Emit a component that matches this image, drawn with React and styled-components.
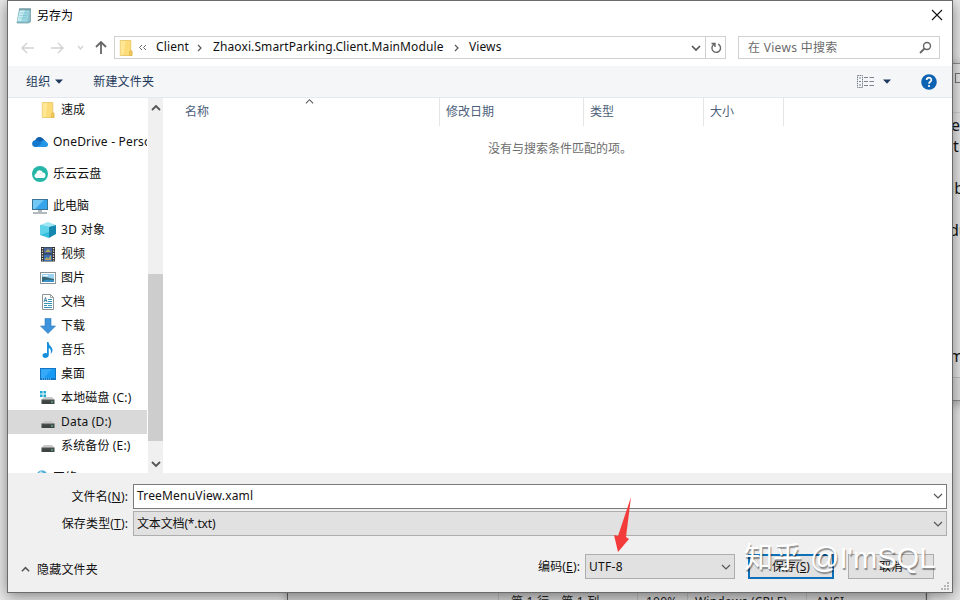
import React from 'react';
import styled, { createGlobalStyle } from 'styled-components';

const GlobalStyle = createGlobalStyle`
  * {
    box-sizing: border-box;
  }

  body {
    margin: 0;
    overflow: hidden;
    font-family: "Noto Sans", "Noto Sans CJK SC", sans-serif;
    font-size: 12px;
    line-height: 16px;
    color: #111;
  }

  svg {
    display: block;
    flex: none;
  }
`;

const Desktop = styled.div`
  position: relative;
  width: 960px;
  height: 600px;
  overflow: hidden;
  background: #e9e9e9;
`;

const SideWindow = styled.div`
  position: absolute;
  left: 940px;
  top: 63px;
  width: 40px;
  height: 338px;
  border: 1px solid #8f8f8f;
  background: #e6e6e6;
  box-shadow: 0 2px 10px rgba(0, 0, 0, 0.3);
`;

const SideTitle = styled.div`
  height: 49px;
  padding: 9px 0 0 14px;
  border-bottom: 1px solid #d0d0d0;
`;

const MaxBox = styled.div`
  width: 10px;
  height: 10px;
  border: 1px solid #777;
`;

const SideStatus = styled.div`
  height: 23px;
  margin-top: 264px;
  border-top: 1px solid #c4c4c4;
  background: #dedede;
`;

const Fragment = styled.span`
  position: absolute;
  left: ${(p) => p.$x}px;
  top: ${(p) => p.$y}px;
  font-size: 16px;
  line-height: 20px;
  color: #151515;
`;

const EditorWindow = styled.div`
  position: absolute;
  left: 287px;
  top: 560px;
  width: 640px;
  height: 60px;
  padding-top: 32px;
  border: 1px solid #666;
  background: #d4d4d4;
  display: flex;
  box-shadow: 0 0 8px rgba(0, 0, 0, 0.25);
`;

const StatusCell = styled.div`
  width: ${(p) => p.$w}px;
  padding-left: ${(p) => p.$pad}px;
  border-right: 1px solid #bdbdbd;
  line-height: 18px;
  letter-spacing: 0.2px;
  white-space: pre;
  color: #222;
`;

const Dialog = styled.div`
  position: absolute;
  left: 7px;
  top: 0;
  width: 946px;
  height: 593px;
  display: flex;
  flex-direction: column;
  border: 1px solid #6b6b6b;
  background: #fff;
  box-shadow: 0 3px 14px rgba(0, 0, 0, 0.45);
`;

const TitleBar = styled.div`
  height: 35px;
  display: flex;
  align-items: flex-start;
  padding: 6px 9px 0 8px;
`;

const Title = styled.div`
  flex: 1;
  padding: 1px 0 0 5px;
  color: #000;
`;

const NavBar = styled.div`
  height: 30px;
  display: flex;
  align-items: flex-start;
  padding: 0 12px 0 13px;
`;

const NavButtons = styled.div`
  width: 93px;
  height: 23px;
  display: flex;
  align-items: center;
`;

const AddressBar = styled.div`
  width: 612px;
  height: 23px;
  display: flex;
  align-items: center;
  border: 1px solid #d0d0d0;
  padding-left: 3px;
`;

const Crumb = styled.span`
  margin-left: ${(p) => p.$gap || 0}px;
  width: ${(p) => p.$w}px;
  letter-spacing: ${(p) => p.$track || 0}px;
  white-space: nowrap;
  padding-bottom: 2px;
`;

const RefreshCell = styled.div`
  width: 20px;
  height: 21px;
  display: flex;
  align-items: center;
  justify-content: center;
  margin-left: 4px;
  border-left: 1px solid #d0d0d0;
`;

const SearchBox = styled.div`
  margin-left: auto;
  width: 202px;
  height: 23px;
  display: flex;
  align-items: center;
  justify-content: space-between;
  border: 1px solid #d0d0d0;
  padding: 0 7px 0 9px;
  color: #6b6b6b;
  letter-spacing: 0.3px;
`;

const Spacer = styled.div`
  flex: 1;
`;

const Toolbar = styled.div`
  height: 32px;
  display: flex;
  align-items: center;
  padding: 0 15px 0 18px;
  background: #f4f6f8;
  border-bottom: 1px solid #e4e8ee;
  color: #1e395b;
`;

const ToolItem = styled.div`
  display: flex;
  align-items: center;
  gap: ${(p) => p.$gap || 5}px;
  margin-right: ${(p) => p.$right || 0}px;
  letter-spacing: 0.15px;
`;

const Main = styled.div`
  height: 375px;
  display: flex;
`;

const Tree = styled.div`
  width: 139px;
  overflow: hidden;
`;

const TreeRow = styled.div`
  height: 24px;
  display: flex;
  align-items: center;
  gap: 5px;
  margin-top: ${(p) => (p.$spaced ? 8 : 0)}px;
  padding-left: ${(p) => (p.$root ? 24 : 32)}px;
  background: ${(p) => (p.$selected ? '#d9d9d9' : 'transparent')};
  white-space: nowrap;
  letter-spacing: ${(p) => p.$track || 0}px;
`;

const ScrollTrack = styled.div`
  width: 15px;
  margin: 0 1px;
  display: flex;
  flex-direction: column;
  align-items: center;
  justify-content: space-between;
  padding: 5px 0 4px;
  background: #f0f0f0;
`;

const ScrollThumb = styled.div`
  width: 15px;
  height: 167px;
  margin-top: 143px;
  background: #cdcdcd;
`;

const FileList = styled.div`
  flex: 1;
`;

const ListHeader = styled.div`
  height: 28px;
  display: flex;
  color: #4c607a;
`;

const Column = styled.div`
  position: relative;
  width: ${(p) => p.$w}px;
  padding: 6px 0 0 ${(p) => p.$pad}px;
  border-right: 1px solid #e5e5e5;
`;

const SortMark = styled.div`
  position: absolute;
  left: 141px;
  top: -1px;
`;

const EmptyText = styled.div`
  padding: 15px 0 0 324px;
  color: #6d6d6d;
`;

const Footer = styled.div`
  flex: 1;
  display: flex;
  flex-direction: column;
  padding: 11px 5px 0 0;
  background: #f0f0f0;
`;

const FieldRow = styled.div`
  display: flex;
  align-items: center;
  margin-bottom: 2px;
`;

const Label = styled.label`
  width: ${(p) => p.$w}px;
  padding-right: 5px;
  text-align: right;
  white-space: nowrap;
  letter-spacing: 0.15px;
`;

const Combo = styled.div`
  width: ${(p) => p.$w}px;
  height: 25px;
  display: flex;
  align-items: center;
  justify-content: space-between;
  padding: ${(p) => (p.$editable ? '0 3px 1px 3px' : '1px 3px 0 3px')};
  border: 1px solid ${(p) => (p.$editable ? '#7a7a7a' : '#adadad')};
  background: ${(p) => (p.$editable ? '#fff' : '#e1e1e1')};
  letter-spacing: ${(p) => p.$track || 0}px;
`;

const ActionRow = styled.div`
  display: flex;
  align-items: center;
  margin-top: 16px;
`;

const HideFolders = styled.div`
  width: 500px;
  display: flex;
  align-items: center;
  gap: 7px;
  padding: 6px 0 0 13px;
  letter-spacing: 0.2px;
`;

const Button = styled.button`
  width: 86px;
  height: 25px;
  margin-left: ${(p) => p.$left}px;
  padding: 0;
  border: ${(p) => (p.$primary ? '2px solid #0e70b8' : '1px solid #adadad')};
  background: #e1e1e1;
  font: inherit;
  color: #111;
`;

const Grip = styled.div`
  position: absolute;
  right: 2px;
  bottom: 1px;
`;

const RedArrow = styled.div`
  position: absolute;
  left: 612px;
  top: 496px;
`;

const Watermark = styled.div`
  position: absolute;
  left: 744px;
  top: 540px;
  font-size: 29px;
  line-height: 36px;
  white-space: nowrap;
  color: #fff;
  font-family: "Liberation Sans", "Noto Sans CJK SC", sans-serif;
  text-shadow: 1px 2px 1px rgba(0, 0, 0, 0.4);
`;

const chevrons = {
  down: 'M1 3L5 7L9 3',
  up: 'M1 7L5 3L9 7',
  right: 'M3 2L6 5L3 8',
};

const Chevron = ({ dir = 'down', color = '#555', size = 10, weight = 1.2 }) => (
  <svg width={size} height={size} viewBox="0 0 10 10" fill="none" stroke={color} strokeWidth={weight}>
    <path d={chevrons[dir]} />
  </svg>
);

const Caret = () => (
  <svg width="8" height="5" viewBox="0 0 8 5">
    <path d="M0 0.5H8L4 4.7Z" fill="#1e395b" />
  </svg>
);

const NotepadIcon = () => (
  <svg width="16" height="17" viewBox="0 0 16 17">
    <path d="M3.5 2H14.5V15L12.5 16H1Z" fill="#88bdc8" stroke="#6b9ba5" strokeWidth="0.7" />
    <path d="M3.8 2.5H13.5L11.5 14.5H1.2Z" fill="#9bd7e3" />
    <path d="M4 3H9L5 14H1.5Z" fill="#c8edf2" />
    <path d="M4 1V3.5M6 1V3.5M8 1V3.5M10 1V3.5M12 1V3.5M14 1V3.5" stroke="#53757d" strokeWidth="0.8" />
    <path d="M4 6H12M3.5 8.5H11.5M3 11H11" stroke="#76b7c6" strokeWidth="0.5" />
  </svg>
);

const FolderIcon = () => (
  <svg width="16" height="16" viewBox="0 0 16 16">
    <path d="M2.3 0.5H12.8V11H14V15.5H2.3Z" fill="#fbdc79" stroke="#e4bd53" strokeWidth="0.7" />
    <path d="M2.7 1H7.5L5.5 15H2.7Z" fill="#ffe895" />
    <path d="M11.5 15.5V11.5L12.8 10.5L14 11.5V15.5Z" fill="#f0c75d" stroke="#d6ac3c" strokeWidth="0.5" />
  </svg>
);

const DriveIcon = ({ system }) => (
  <svg width="16" height="16" viewBox="0 0 16 16">
    {system && <path d="M0 1H2.6V3.5H0ZM3.5 1H6V3.5H3.5ZM0 4.4H2.6V7H0ZM3.5 4.4H6V7H3.5Z" fill="#20a9d2" />}
    <path d="M4 7H12L14.5 10H1.5Z" fill="#c8c8c8" />
    <path d="M1.5 9.7H14.5V14H1.5Z" fill="#3f4543" />
    <path d="M1.5 9.7H14.5" stroke="#858a88" strokeWidth="0.8" />
    <path d="M11 12H13" stroke="#65e2a1" strokeWidth="1.2" />
  </svg>
);

const icons = {
  folder: <FolderIcon />,
  onedrive: (
    <svg width="16" height="16" viewBox="0 0 16 16">
      <path d="M3 7C4 3 8 1.5 11 4.5L13 7L7 11L3 8Z" fill="#0f5fae" />
      <path d="M3.5 6C6 5.7 8 8 11 10L9 13H3.5C-1 13-1 6.5 3.5 6Z" fill="#1478cd" />
      <path d="M11 6.5C13 5.5 14 7 14.2 8C17 9 16.5 13 13.5 13H4L10 9.5L8 8Z" fill="#2396e6" />
    </svg>
  ),
  cloud: (
    <svg width="16" height="16" viewBox="0 0 16 16">
      <circle cx="8" cy="8" r="8" fill="#25b6a7" />
      <path d="M4.6 12C1.8 12 2 8 4.3 7.5C4.8 3.8 9.3 3.2 10.7 6.5C14.2 6.2 14.5 12 11.2 12Z" fill="#fff" />
      <path d="M6.5 9.5L9 7L11 9.5" fill="none" stroke="#d5efeb" />
    </svg>
  ),
  pc: (
    <svg width="16" height="16" viewBox="0 0 16 16">
      <rect x="0.5" y="1.5" width="15" height="10" fill="#37a5e9" stroke="#397496" />
      <path d="M1 2H12L3 11H1Z" fill="#73c8f5" />
      <path d="M6 13H10M1 15H15" stroke="#67757d" />
    </svg>
  ),
  cube: (
    <svg width="16" height="16" viewBox="0 0 16 16">
      <path d="M0 3L8 0L16 3L8 6Z" fill="#9de7f4" />
      <path d="M0 3L9 5V16L0 13Z" fill="#36bddd" />
      <path d="M9 5L16 3V12L9 16Z" fill="#1687ae" />
      <path d="M0 3L9 5V10L0 13Z" fill="#60d3e9" />
    </svg>
  ),
  video: (
    <svg width="16" height="16" viewBox="0 0 16 16">
      <path d="M1 1H15V15.5H1Z" fill="#2d302f" />
      <path d="M4 1.5H12V7.5H4Z" fill="#48669d" />
      <path d="M4 8.5H12V15H4Z" fill="#3c6fb7" />
      <path d="M5 6L8 3L11 6ZM5 13L7 11L8 13L11 9L11 14H5Z" fill="#b5a75c" />
      <path d="M2.5 2V15M13.5 2V15" stroke="#e7e7e7" strokeWidth="1.4" strokeDasharray="1.3 1.2" />
    </svg>
  ),
  picture: (
    <svg width="16" height="16" viewBox="0 0 16 16">
      <rect x="0.5" y="2.5" width="15" height="11" fill="#fff" stroke="#8b9499" />
      <path d="M2 4H14V12H2Z" fill="#9bd2f2" />
      <path d="M2 7C5 6 8 8 14 9V12H2Z" fill="#376979" />
      <path d="M4 10.5C8 9 10 10 14 10V12H2Z" fill="#3a92c6" />
      <path d="M3 5H8V6.3H3Z" fill="#edf9ff" />
    </svg>
  ),
  document: (
    <svg width="16" height="16" viewBox="0 0 16 16">
      <path d="M2.5 0.5H10.5L13.5 3.5V15.5H2.5Z" fill="#fff" stroke="#8a9499" />
      <path d="M10.5 0.5V3.5H13.5" fill="none" stroke="#8a9499" strokeWidth="0.8" />
      <path d="M8 5.5H12M8 7.5H12M4 9.5H12M4 11.5H7M8 11.5H12M4 13.5H12" stroke="#3a93b6" />
      <path d="M4 8L5.5 3.5L7 8M4.5 6.5H6.5" stroke="#458eae" fill="none" />
    </svg>
  ),
  download: (
    <svg width="16" height="16" viewBox="0 0 16 16">
      <path d="M5 0.5H11V8H15.5L8 15.5L0.5 8H5Z" fill="#3e94dc" stroke="#2c77b9" strokeWidth="0.6" />
    </svg>
  ),
  music: (
    <svg width="16" height="16" viewBox="0 0 16 16">
      <path d="M7 0H8.6C8.7 4 13 5 12.5 8.5C12.3 10 11.5 11 10.7 12C11.3 8 10.5 7 8.8 6V13C8.8 16.5 2.5 17 2.5 13.8C2.5 11.3 5 10.5 7 11.4Z" fill="#158fdb" />
    </svg>
  ),
  desktop: (
    <svg width="16" height="16" viewBox="0 0 16 16">
      <path d="M0 2H16V14H0Z" fill="#1476c1" />
      <path d="M1 3H15V12H1Z" fill="#189bf5" />
      <path d="M2 13H12" stroke="#92d5ff" strokeDasharray="1 1" />
      <path d="M1 3H12L4 12H1Z" fill="#35a9f8" />
    </svg>
  ),
  system: <DriveIcon system />,
  drive: <DriveIcon />,
  network: (
    <svg width="16" height="16" viewBox="0 0 16 16">
      <circle cx="10" cy="5.5" r="5.2" fill="#50aeda" />
      <path d="M6 4L9 1L12 4L8 7Z" fill="#c2e5f2" />
    </svg>
  ),
};

const treeItems = [
  { icon: 'folder', text: '速成' },
  { icon: 'onedrive', text: 'OneDrive - Personal', root: true, spaced: true, track: 0.2 },
  { icon: 'cloud', text: '乐云云盘', root: true, spaced: true, track: 0.1 },
  { icon: 'pc', text: '此电脑', root: true, spaced: true },
  { icon: 'cube', text: '3D 对象', track: 0.3 },
  { icon: 'video', text: '视频' },
  { icon: 'picture', text: '图片' },
  { icon: 'document', text: '文档' },
  { icon: 'download', text: '下载' },
  { icon: 'music', text: '音乐' },
  { icon: 'desktop', text: '桌面' },
  { icon: 'system', text: '本地磁盘 (C:)', track: 0.15 },
  { icon: 'drive', text: 'Data (D:)', selected: true, track: 0.2 },
  { icon: 'drive', text: '系统备份 (E:)', track: 0.15 },
  { icon: 'network', text: '网络', root: true, spaced: true },
];

const columns = [
  { text: '名称', w: 276, pad: 21, sorted: true },
  { text: '修改日期', w: 144, pad: 6 },
  { text: '类型', w: 120, pad: 6 },
  { text: '大小', w: 80, pad: 6 },
];

const Navigation = () => (
  <NavBar>
    <NavButtons>
      <svg width="93" height="23" viewBox="0 0 93 23" fill="none">
        <path d="M13 12H1M6 7L1 12L6 17M30 12H42M37 7L42 12L37 17" stroke="#d2d2d2" strokeWidth="1.4" />
        <path d="M57 10L59.5 13L62 10" stroke="#d2d2d2" strokeWidth="1.3" />
        <path d="M80 18V6M75 11L80 6L85 11" stroke="#666" strokeWidth="1.8" />
      </svg>
    </NavButtons>
    <AddressBar>
      <FolderIcon />
      <svg width="13" height="9" viewBox="0 0 13 9" fill="none" stroke="#666">
        <path d="M8 2L5.5 4.5L8 7M12 2L9.5 4.5L12 7" />
      </svg>
      <Crumb $gap={9} $w={39} $track={0.12}>Client</Crumb>
      <Chevron dir="right" />
      <Crumb $gap={8} $w={239} $track={0.1}>Zhaoxi.SmartParking.Client.MainModule</Crumb>
      <Chevron dir="right" />
      <Crumb $gap={7} $w={40} $track={0.1}>Views</Crumb>
      <Spacer />
      <Chevron weight={1.7} />
      <RefreshCell>
        <svg width="12" height="12" viewBox="0 0 12 12" fill="none" stroke="#666" strokeWidth="1.4">
          <path d="M8.2 2.2A4.3 4.3 0 1 1 3 3.2L4.7 1.7M1.5 1.5H5V5" />
        </svg>
      </RefreshCell>
    </AddressBar>
    <SearchBox>
      <span>在 Views 中搜索</span>
      <svg width="13" height="13" viewBox="0 0 13 13" fill="none" stroke="#666" strokeWidth="1.4">
        <circle cx="8" cy="5" r="3.5" />
        <path d="M5.5 7.5L1 12" strokeWidth="1.8" />
      </svg>
    </SearchBox>
  </NavBar>
);

const FolderTree = () => (
  <Tree>
    {treeItems.map((item) => (
      <TreeRow
        key={item.text}
        $root={item.root}
        $spaced={item.spaced}
        $selected={item.selected}
        $track={item.track}
      >
        {icons[item.icon]}
        <span>{item.text}</span>
      </TreeRow>
    ))}
  </Tree>
);

const App = () => {
  return (
    <Desktop>
      <GlobalStyle />
      <SideWindow>
        <SideTitle>
          <MaxBox />
        </SideTitle>
        <SideStatus />
      </SideWindow>
      <Fragment $x={951} $y={115}>e</Fragment>
      <Fragment $x={953} $y={136}>t</Fragment>
      <Fragment $x={950} $y={178}>ib</Fragment>
      <Fragment $x={949} $y={220}>du</Fragment>
      <Fragment $x={949} $y={346}>m</Fragment>
      <EditorWindow>
        <StatusCell $w={211} $pad={0} />
        <StatusCell $w={139} $pad={12}>第 1 行，第 1 列</StatusCell>
        <StatusCell $w={50} $pad={8}>100%</StatusCell>
        <StatusCell $w={119} $pad={7}>Windows (CRLF)</StatusCell>
        <StatusCell $w={119} $pad={9}>ANSI</StatusCell>
      </EditorWindow>

      <Dialog>
        <TitleBar>
          <NotepadIcon />
          <Title>另存为</Title>
          <svg width="12" height="16" viewBox="0 0 12 16" stroke="#111" strokeWidth="1.1">
            <path d="M1 3L11 13M11 3L1 13" />
          </svg>
        </TitleBar>
        <Navigation />
        <Toolbar>
          <ToolItem $right={30}>
            组织
            <Caret />
          </ToolItem>
          <ToolItem>新建文件夹</ToolItem>
          <Spacer />
          <ToolItem $right={30} $gap={9}>
            <svg width="17" height="13" viewBox="0 0 17 13" fill="none" stroke="#7b8490">
              <path d="M0.5 0.5H5.5V12.5H0.5Z" strokeDasharray="1.5 0.6" />
              <path d="M2 3H4M2 6.5H4M2 10H4M7 2.5H11M12.5 2.5H17M7 6.5H11M12.5 6.5H17M7 10.5H11M12.5 10.5H17" />
            </svg>
            <Caret />
          </ToolItem>
          <svg width="16" height="16" viewBox="0 0 16 16">
            <circle cx="8" cy="8" r="7.8" fill="#0e62b2" />
            <path d="M5.6 6C5.6 2.8 10.5 3 10.4 6C10.4 7.8 8 7.8 8 9.8" fill="none" stroke="#fff" strokeWidth="1.7" />
            <circle cx="8" cy="12" r="1.1" fill="#fff" />
          </svg>
        </Toolbar>
        <Main>
          <FolderTree />
          <ScrollTrack>
            <Chevron dir="up" weight={1.8} />
            <ScrollThumb />
            <Chevron weight={1.8} />
          </ScrollTrack>
          <FileList>
            <ListHeader>
              {columns.map((col) => (
                <Column key={col.text} $w={col.w} $pad={col.pad}>
                  {col.sorted && (
                    <SortMark>
                      <Chevron dir="up" size={9} />
                    </SortMark>
                  )}
                  {col.text}
                </Column>
              ))}
            </ListHeader>
            <EmptyText>没有与搜索条件匹配的项。</EmptyText>
          </FileList>
        </Main>
        <Footer>
          <FieldRow>
            <Label $w={125}>文件名(<u>N</u>):</Label>
            <Combo $w={814} $track={0.18} $editable>
              TreeMenuView.xaml
              <Chevron />
            </Combo>
          </FieldRow>
          <FieldRow>
            <Label $w={125}>保存类型(<u>T</u>):</Label>
            <Combo $w={814} $track={-0.15}>
              文本文档(*.txt)
              <Chevron />
            </Combo>
          </FieldRow>
          <ActionRow>
            <HideFolders>
              <Chevron dir="up" weight={1.7} size={9} />
              隐藏文件夹
            </HideFolders>
            <Label $w={77}>编码(<u>E</u>):</Label>
            <Combo $w={150} $track={0.3}>
              UTF-8
              <Chevron />
            </Combo>
            <Button $left={13} $primary>保存(<u>S</u>)</Button>
            <Button $left={14}>取消</Button>
          </ActionRow>
        </Footer>
        <Grip>
          <svg width="9" height="9" viewBox="0 0 9 9" fill="#b5b5b5">
            <path d="M6 0H8V2H6ZM3 3H5V5H3ZM6 3H8V5H6ZM0 6H2V8H0ZM3 6H5V8H3ZM6 6H8V8H6Z" />
          </svg>
        </Grip>
      </Dialog>

      <RedArrow>
        <svg width="20" height="57" viewBox="0 0 20 57">
          <path d="M19 1L14 41L17 43L6 56L2 39L6 40Z" fill="#f43b3c" />
        </svg>
      </RedArrow>
      <Watermark>知乎 @I'mSQL</Watermark>
    </Desktop>
  );
};

export default App;
